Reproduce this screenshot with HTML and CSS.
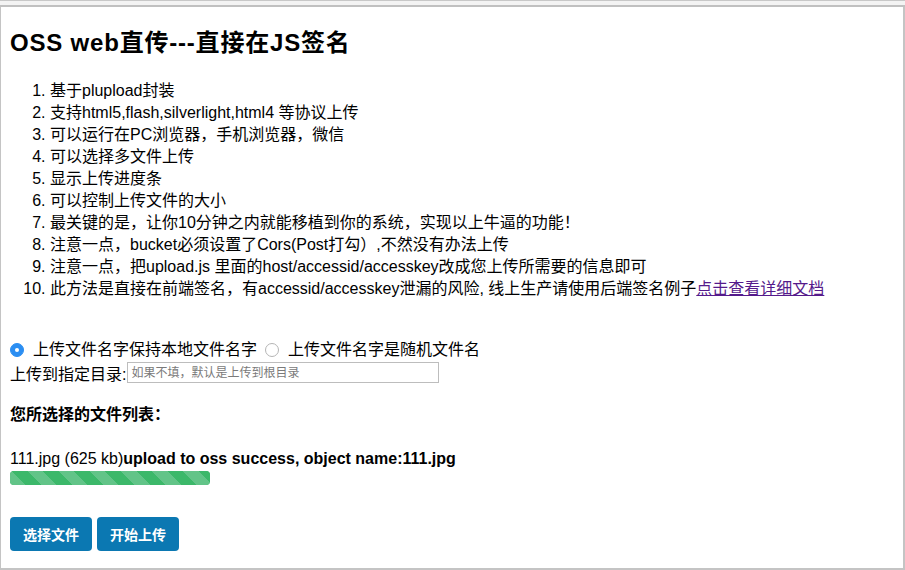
FILE: index.html
```html
<!DOCTYPE html>
<html lang="zh-CN">
<head>
<meta charset="utf-8">
<title>OSS web直传</title>
<link rel="stylesheet" href="styles.css">
</head>
<body>
<div class="window">
  <div class="topbar"></div>
  <div class="page">
    <h1 class="title">OSS web直传---直接在JS签名</h1>
    <ol class="features">
      <li>基于plupload封装</li>
      <li>支持html5,flash,silverlight,html4 等协议上传</li>
      <li>可以运行在PC浏览器，手机浏览器，微信</li>
      <li>可以选择多文件上传</li>
      <li>显示上传进度条</li>
      <li>可以控制上传文件的大小</li>
      <li>最关键的是，让你10分钟之内就能移植到你的系统，实现以上牛逼的功能！</li>
      <li>注意一点，bucket必须设置了Cors(Post打勾）,不然没有办法上传</li>
      <li>注意一点，把upload.js 里面的host/accessid/accesskey改成您上传所需要的信息即可</li>
      <li>此方法是直接在前端签名，有accessid/accesskey泄漏的风险, 线上生产请使用后端签名例子<a class="doc-link" href="#">点击查看详细文档</a></li>
    </ol>

    <div class="radio-row">
      <label class="radio-label"><input class="radio" type="radio" name="myradio" value="local_name" checked>上传文件名字保持本地文件名字</label>
      <label class="radio-label"><input class="radio" type="radio" name="myradio" value="random_name">上传文件名字是随机文件名</label>
    </div>
    <div class="dir-row">上传到指定目录:<input class="dir-input" type="text" placeholder="如果不填，默认是上传到根目录"></div>

    <h4 class="list-title">您所选择的文件列表：</h4>
    <div class="file-item">111.jpg (625 kb)<b>upload to oss success, object name:111.jpg</b></div>
    <div class="progress"><div class="progress-bar" style="width:100%"></div></div>

    <div class="buttons">
      <button class="btn" type="button">选择文件</button>
      <button class="btn" type="button">开始上传</button>
    </div>
  </div>
</div>
</body>
</html>
```

FILE: styles.css
```css
* {
  box-sizing: border-box;
}

html, body {
  margin: 0;
  padding: 0;
  background: #ffffff;
}

body {
  font-family: "Liberation Sans", "Noto Sans CJK SC", sans-serif;
  font-size: 16px;
  color: #000000;
}

.window {
  width: 905px;
  height: 570px;
  display: flex;
  flex-direction: column;
}

.topbar {
  height: 7px;
  border-top: 1px solid #c8c8c8;
  border-bottom: 2px solid #c0c0c0;
  background: #f3f3f3;
  flex: none;
}

.page {
  flex: 1;
  border-left: 1px solid #c4c4c4;
  border-right: 2px solid #c4c4c4;
  border-bottom: 2px solid #c4c4c4;
  padding: 0 9px;
}

.title {
  margin: 21px 0 0;
  font-size: 24px;
  line-height: 30px;
  font-weight: bold;
  letter-spacing: 0.8px;
}

.features {
  margin: 22px 0 0;
  padding-left: 40px;
  line-height: 22px;
}

.doc-link {
  color: #551a8b;
  text-decoration: underline;
}

.radio-row {
  margin-top: 39px;
  height: 22px;
  display: flex;
  align-items: center;
}

.radio-label {
  display: inline-flex;
  align-items: center;
  line-height: 22px;
  margin-right: 8px;
}

.radio {
  appearance: none;
  -webkit-appearance: none;
  width: 14px;
  height: 14px;
  margin: 0 9px 0 0;
  border-radius: 50%;
  border: 1px solid #b5b5b5;
  background: #ffffff;
  position: relative;
}

.radio:checked {
  border-color: #2b8ef2;
  background: #2b8ef2;
}

.radio:checked::after {
  content: "";
  position: absolute;
  left: 4px;
  top: 4px;
  width: 4px;
  height: 4px;
  border-radius: 50%;
  background: #ffffff;
}

.dir-row {
  height: 23px;
  display: flex;
  align-items: center;
}

.dir-input {
  width: 312px;
  height: 21px;
  margin: 0 0 0 1px;
  padding: 0 3px;
  border: 1px solid #bdbdbd;
  font-family: "Liberation Sans", "Noto Sans CJK SC", sans-serif;
  font-size: 12px;
  outline: none;
}

.dir-input::placeholder {
  color: #7a7a7a;
}

.list-title {
  margin: 20px 0 0;
  font-size: 16px;
  line-height: 22px;
  font-weight: bold;
}

.file-item {
  margin-top: 22px;
  line-height: 22px;
}

.progress {
  margin-top: 1px;
  width: 200px;
  height: 14px;
  border-radius: 4px;
  overflow: hidden;
  background: #f0f0f0;
}

.progress-bar {
  height: 100%;
  background-color: #3cb86a;
  background-image: repeating-linear-gradient(45deg, #62c488 0 11px, #3cb86a 11px 22px);
}

.buttons {
  margin-top: 32px;
  display: flex;
  gap: 5px;
}

.btn {
  width: 82px;
  height: 34px;
  padding: 0;
  border: none;
  border-radius: 4px;
  background: #0b78b2;
  color: #ffffff;
  font-family: "Liberation Sans", "Noto Sans CJK SC", sans-serif;
  font-size: 14px;
  font-weight: bold;
  cursor: pointer;
}
```
